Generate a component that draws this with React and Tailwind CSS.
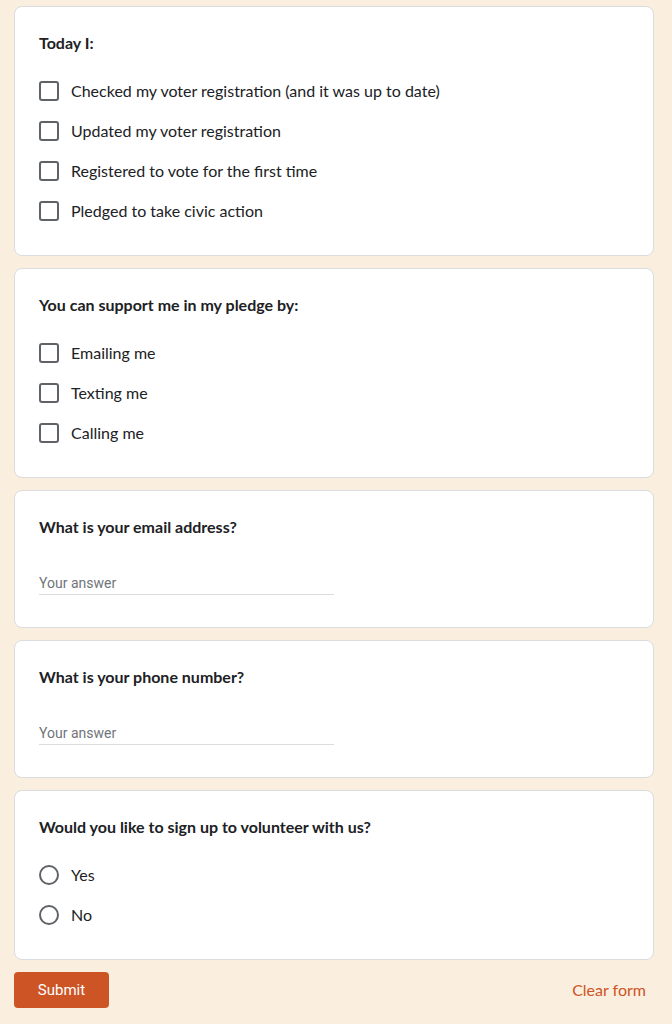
import { useState } from "react";

const font = { fontFamily: "Lato, 'Open Sans', sans-serif" };

function Card({ title, children }) {
  return (
    <div className="bg-white border border-[#dadce0] rounded-lg p-6">
      <div className="text-[16px] font-bold text-[#202124] leading-6">{title}</div>
      {children}
    </div>
  );
}

function CheckList({ items }) {
  const [checked, setChecked] = useState({});
  return (
    <div className="mt-4">
      {items.map((item) => (
        <label
          key={item}
          className="flex items-center h-10 cursor-pointer"
          onClick={() => setChecked((c) => ({ ...c, [item]: !c[item] }))}
        >
          <span className="w-5 h-5 border-2 border-[#5f6368] rounded-[3px] shrink-0 flex items-center justify-center">
            {checked[item] && <span className="w-2.5 h-2.5 bg-[#cd5425]" />}
          </span>
          <span className="ml-3 text-[16px] text-[#202124]">{item}</span>
        </label>
      ))}
    </div>
  );
}

function RadioList({ items }) {
  const [value, setValue] = useState(null);
  return (
    <div className="mt-4">
      {items.map((item) => (
        <label key={item} className="flex items-center h-10 cursor-pointer" onClick={() => setValue(item)}>
          <span className="w-5 h-5 border-2 border-[#5f6368] rounded-full shrink-0 flex items-center justify-center">
            {value === item && <span className="w-2.5 h-2.5 rounded-full bg-[#cd5425]" />}
          </span>
          <span className="ml-3 text-[16px] text-[#202124]">{item}</span>
        </label>
      ))}
    </div>
  );
}

function TextAnswer() {
  return (
    <div className="mt-[32px] pb-[8px] w-[295px]">
      <input
        placeholder="Your answer"
        className="block w-full h-6 text-[14px] text-[#202124] placeholder:text-[#70757a] border-b border-[#dadce0] outline-none bg-transparent"
        style={{ fontFamily: "Roboto, Arial, sans-serif" }}
      />
    </div>
  );
}

export default function App() {
  return (
    <div className="min-h-[1024px] bg-[#faeedf] pl-[14px] pr-[18px] pt-[6px] pb-4" style={font}>
      <div className="flex flex-col gap-3">
        <Card title="Today I:">
          <CheckList
            items={[
              "Checked my voter registration (and it was up to date)",
              "Updated my voter registration",
              "Registered to vote for the first time",
              "Pledged to take civic action",
            ]}
          />
        </Card>
        <Card title="You can support me in my pledge by:">
          <CheckList items={["Emailing me", "Texting me", "Calling me"]} />
        </Card>
        <Card title="What is your email address?">
          <TextAnswer />
        </Card>
        <Card title="What is your phone number?">
          <TextAnswer />
        </Card>
        <Card title="Would you like to sign up to volunteer with us?">
          <RadioList items={["Yes", "No"]} />
        </Card>
      </div>
      <div className="flex items-center justify-between mt-3">
        <button
          className="w-[95px] h-9 rounded bg-[#cd5425] text-white text-[15px] font-normal"
          style={{ fontFamily: "Roboto, Arial, sans-serif" }}
        >
          Submit
        </button>
        <button className="text-[#cd5425] text-[16px] pr-2">Clear form</button>
      </div>
    </div>
  );
}
